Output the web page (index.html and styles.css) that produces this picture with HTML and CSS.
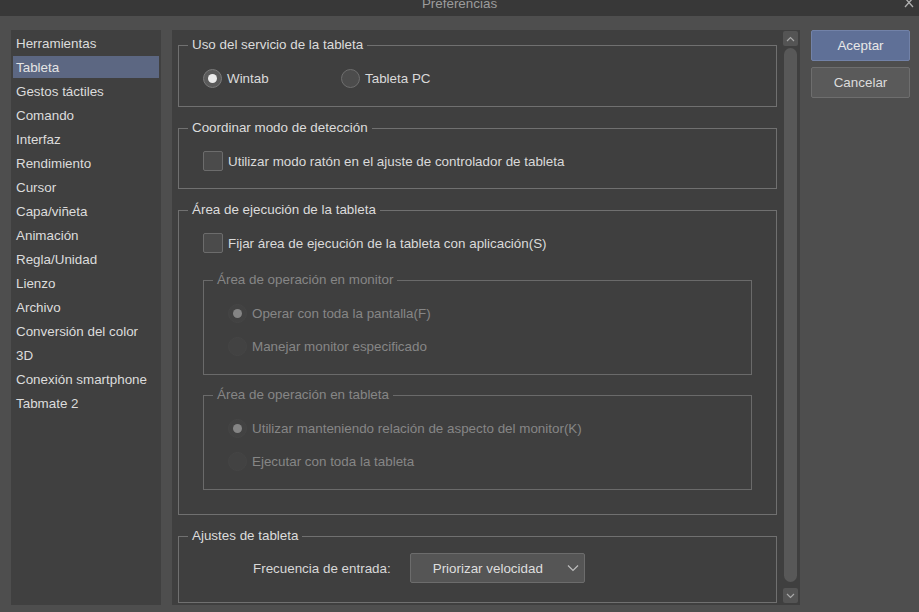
FILE: index.html
```html
<!DOCTYPE html>
<html lang="es">
<head>
<meta charset="utf-8">
<title>Preferencias</title>
<link rel="stylesheet" href="styles.css">
</head>
<body>
<div class="titlebar">
  <span class="title">Preferencias</span>
  <svg class="close" width="10" height="10" viewBox="0 0 10 10"><path d="M1 -2 L9 7 M9 -2 L1 7" stroke="#b0b0b0" stroke-width="1.3" fill="none"/></svg>
</div>
<div class="dialog">
  <ul class="nav">
    <li>Herramientas</li>
    <li class="active">Tableta</li>
    <li>Gestos táctiles</li>
    <li>Comando</li>
    <li>Interfaz</li>
    <li>Rendimiento</li>
    <li>Cursor</li>
    <li>Capa/viñeta</li>
    <li>Animación</li>
    <li>Regla/Unidad</li>
    <li>Lienzo</li>
    <li>Archivo</li>
    <li>Conversión del color</li>
    <li>3D</li>
    <li>Conexión smartphone</li>
    <li>Tabmate 2</li>
  </ul>

  <div class="panel">
    <div class="panel-content">
      <fieldset class="group">
        <legend>Uso del servicio de la tableta</legend>
        <div class="group-body row-radios">
          <label class="opt opt-wide"><span class="radio checked"></span>Wintab</label>
          <label class="opt"><span class="radio"></span>Tableta PC</label>
        </div>
      </fieldset>

      <fieldset class="group">
        <legend>Coordinar modo de detección</legend>
        <div class="group-body body-check">
          <label class="opt"><span class="check"></span>Utilizar modo ratón en el ajuste de controlador de tableta</label>
        </div>
      </fieldset>

      <fieldset class="group">
        <legend>Área de ejecución de la tableta</legend>
        <div class="group-body body-area">
          <label class="opt"><span class="check"></span>Fijar área de ejecución de la tableta con aplicación(S)</label>

          <fieldset class="group inner disabled">
            <legend>Área de operación en monitor</legend>
            <div class="group-body col-radios">
              <label class="opt"><span class="radio dis checked"></span>Operar con toda la pantalla(F)</label>
              <label class="opt"><span class="radio dis"></span>Manejar monitor especificado</label>
            </div>
          </fieldset>

          <fieldset class="group inner disabled">
            <legend>Área de operación en tableta</legend>
            <div class="group-body col-radios">
              <label class="opt"><span class="radio dis checked"></span>Utilizar manteniendo relación de aspecto del monitor(K)</label>
              <label class="opt"><span class="radio dis"></span>Ejecutar con toda la tableta</label>
            </div>
          </fieldset>
        </div>
      </fieldset>

      <fieldset class="group last">
        <legend>Ajustes de tableta</legend>
        <div class="group-body body-settings">
          <span class="field-label">Frecuencia de entrada:</span>
          <div class="select">
            <span>Priorizar velocidad</span>
            <svg width="12" height="8" viewBox="0 0 12 8"><path d="M1 1.5 L6 6.5 L11 1.5" stroke="#bdbdbd" stroke-width="1.2" fill="none"/></svg>
          </div>
        </div>
      </fieldset>
    </div>

    <div class="scrollbar">
      <div class="sb-btn"><svg width="9" height="6" viewBox="0 0 9 6"><path d="M1 5 L4.5 1.5 L8 5" stroke="#a8a8a8" stroke-width="1.2" fill="none"/></svg></div>
      <div class="sb-thumb"></div>
      <div class="sb-btn"><svg width="9" height="6" viewBox="0 0 9 6"><path d="M1 1 L4.5 4.5 L8 1" stroke="#a8a8a8" stroke-width="1.2" fill="none"/></svg></div>
    </div>
  </div>

  <div class="buttons">
    <button class="btn primary">Aceptar</button>
    <button class="btn">Cancelar</button>
  </div>
</div>
</body>
</html>
```
FILE: styles.css
```css
* { box-sizing: border-box; }

html, body {
  margin: 0;
  padding: 0;
  width: 919px;
  height: 612px;
  overflow: hidden;
  background: #4e4e4e;
  font-family: "Liberation Sans", Arial, sans-serif;
  font-size: 13.4px;
  color: #d8d8d8;
}

.titlebar {
  height: 16px;
  background: #383838;
  position: relative;
  overflow: hidden;
  text-align: center;
}

.title {
  display: block;
  line-height: 13px;
  margin-top: -3px;
  color: #9c9c9c;
  font-size: 13.4px;
}

.close {
  position: absolute;
  right: 5px;
  top: 0;
}

.dialog {
  display: flex;
  padding: 14px 9px 0 11px;
  gap: 11px;
  height: 591px;
}

.nav {
  list-style: none;
  margin: 0;
  padding: 2px 2px;
  width: 150px;
  height: 575px;
  background: #404040;
}

.nav li {
  height: 22px;
  line-height: 23px;
  margin-bottom: 2px;
  padding-left: 3px;
  color: #dcdcdc;
  white-space: nowrap;
}

.nav li.active {
  background: #5c6782;
  color: #e4e4e4;
}

.panel {
  width: 628px;
  height: 575px;
  background: #3f3f3f;
  display: flex;
  overflow: hidden;
}

.panel-content {
  flex: 1;
  padding: 7px 6px 0 6px;
  display: flex;
  flex-direction: column;
  gap: 13px;
}

.group {
  margin: 0;
  padding: 0;
  border: 1px solid #707070;
  min-width: 0;
}

.group legend {
  margin-left: 9px;
  padding: 0 4px;
  line-height: 16px;
  color: #dcdcdc;
}

.group-body {
  padding: 15px 24px 18px 24px;
}

.body-check {
  padding-bottom: 17px;
}

.opt {
  display: flex;
  align-items: center;
  height: 20px;
  gap: 5px;
  white-space: nowrap;
  color: #dadada;
  padding-top: 1px;
}

.row-radios {
  display: flex;
}

.opt-wide {
  width: 138px;
}

.radio {
  width: 19px;
  height: 19px;
  border-radius: 50%;
  border: 1px solid #6e6e6e;
  background: #4c4c4c;
  display: flex;
  align-items: center;
  justify-content: center;
  flex: none;
  margin-top: -1px;
}

.radio.checked {
  background: #5a5a5a;
  border-color: #7a7a7a;
}

.radio.checked::after {
  content: "";
  width: 9px;
  height: 9px;
  border-radius: 50%;
  background: #ececec;
}

.radio.dis {
  border-color: #454545;
  background: #424242;
}

.radio.dis.checked::after {
  background: #858585;
}

.check {
  width: 20px;
  height: 20px;
  border: 1px solid #6c6c6c;
  border-radius: 2px;
  background: #4b4b4b;
  flex: none;
  margin-top: -1px;
}

.body-area {
  padding-bottom: 24px;
}

.group.inner {
  margin-top: 19px;
  border-color: #6a6a6a;
}

.group.inner + .group.inner {
  margin-top: 12px;
}

.group.disabled legend,
.group.disabled .opt {
  color: #868686;
}

.col-radios {
  display: flex;
  flex-direction: column;
  gap: 13px;
  padding-bottom: 18px;
}

.body-settings {
  display: flex;
  align-items: center;
  padding: 9px 24px 19px 74px;
}

.field-label {
  color: #d8d8d8;
  margin-right: 19px;
}

.select {
  width: 175px;
  height: 30px;
  background: #555555;
  border: 1px solid #6c6c6c;
  border-radius: 2px;
  display: flex;
  align-items: center;
  padding: 0 5px 0 22px;
  justify-content: space-between;
  color: #dedede;
}

.scrollbar {
  width: 15px;
  margin: 1px 2px 2px 0;
  display: flex;
  flex-direction: column;
  gap: 2px;
}

.sb-btn {
  height: 15px;
  background: #545454;
  border-radius: 2px;
  display: flex;
  align-items: center;
  justify-content: center;
}

.sb-thumb {
  flex: 1;
  margin: 0 1px 4px 1px;
  background: #585858;
  border-radius: 7px;
}

.buttons {
  display: flex;
  flex-direction: column;
  gap: 6px;
}

.btn {
  width: 99px;
  height: 31px;
  font-family: inherit;
  font-size: 13.4px;
  border-radius: 2px;
  background: #5a5a5a;
  border: 1px solid #6e6e6e;
  color: #dcdcdc;
  padding: 0;
}

.btn.primary {
  background: #5f7097;
  border-color: #7282a8;
  color: #e8e8e8;
}
```
